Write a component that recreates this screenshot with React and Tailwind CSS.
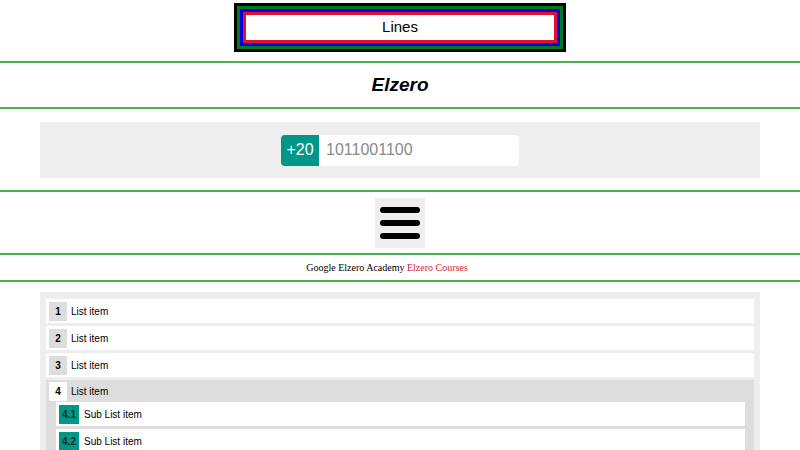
import React from 'react';

const Line = () => <div className="h-[2px] w-full bg-[#4caf50]"></div>;

export default function App() {
  const items = ['1', '2', '3'];
  const subs = ['4.1', '4.2'];

  return (
    <div className="w-[800px] h-[450px] overflow-hidden bg-white font-['Liberation_Sans',Arial,sans-serif] text-black">
      {/* Lines box */}
      <div className="flex justify-center pt-[3px]">
        <div className="border-[3px] border-black">
          <div className="border-[3px] border-[#007a1c]">
            <div className="border-[3px] border-[#0000e0]">
              <div className="border-[3px] border-[#e0102f] w-[314px] h-[31px] flex items-center justify-center text-[15px]">
                Lines
              </div>
            </div>
          </div>
        </div>
      </div>

      <div className="mt-[9px]"><Line /></div>
      <div className="h-[44px] flex items-center justify-center text-[19px] font-bold italic">Elzero</div>
      <Line />

      {/* Phone input */}
      <div className="mt-[13px] mx-[40px] h-[56px] bg-[#eeeeee] flex items-center justify-center">
        <div className="flex h-[31px]">
          <div className="w-[38px] bg-[#009688] text-white rounded-l-[4px] flex items-center justify-center text-[16px]">+20</div>
          <div className="w-[200px] bg-white rounded-r-[4px] flex items-center pl-[7px] text-[16px] text-[#8a8a8a]">1011001100</div>
        </div>
      </div>

      <div className="mt-[12px]"><Line /></div>

      {/* Hamburger */}
      <div className="flex justify-center mt-[6px]">
        <div className="w-[50px] h-[50px] bg-[#eeeeee] flex flex-col items-center justify-center gap-[7px]">
          <span className="w-[40px] h-[6px] rounded-full bg-black"></span>
          <span className="w-[40px] h-[6px] rounded-full bg-black"></span>
          <span className="w-[40px] h-[6px] rounded-full bg-black"></span>
        </div>
      </div>

      <div className="mt-[5px]"><Line /></div>
      <div className="h-[25px] flex items-center justify-center pr-[26px] text-[10px] font-['Liberation_Serif','Times_New_Roman',serif]">
        <span>Google Elzero Academy&nbsp;</span>
        <span className="text-[#d6223a]">Elzero Courses</span>
      </div>
      <Line />

      {/* List */}
      <div className="mt-[10px] mx-[40px] bg-[#eeeeee] px-[6px] pt-[7px] pb-[8px] flex flex-col gap-[3px]">
        {items.map((n) => (
          <div key={n} className="h-[24px] bg-white flex items-center pl-[3px]">
            <span className="w-[18px] h-[19px] bg-[#dddddd] flex items-center justify-center text-[10px] font-bold">{n}</span>
            <span className="ml-[4px] text-[10px]">List item</span>
          </div>
        ))}
        <div className="bg-[#dddddd] pb-[6px]">
          <div className="h-[22px] flex items-center pl-[3px]">
            <span className="w-[18px] h-[19px] bg-white flex items-center justify-center text-[10px] font-bold">4</span>
            <span className="ml-[4px] text-[10px]">List item</span>
          </div>
          <div className="ml-[10px] mr-[9px] flex flex-col gap-[3px]">
            {subs.map((n) => (
              <div key={n} className="h-[24px] bg-white flex items-center pl-[3px]">
                <span className="w-[20px] h-[19px] bg-[#009688] flex items-center justify-center text-[10px] font-bold text-[#1a2a28]">{n}</span>
                <span className="ml-[5px] text-[10px]">Sub List item</span>
              </div>
            ))}
          </div>
        </div>
      </div>
    </div>
  );
}
